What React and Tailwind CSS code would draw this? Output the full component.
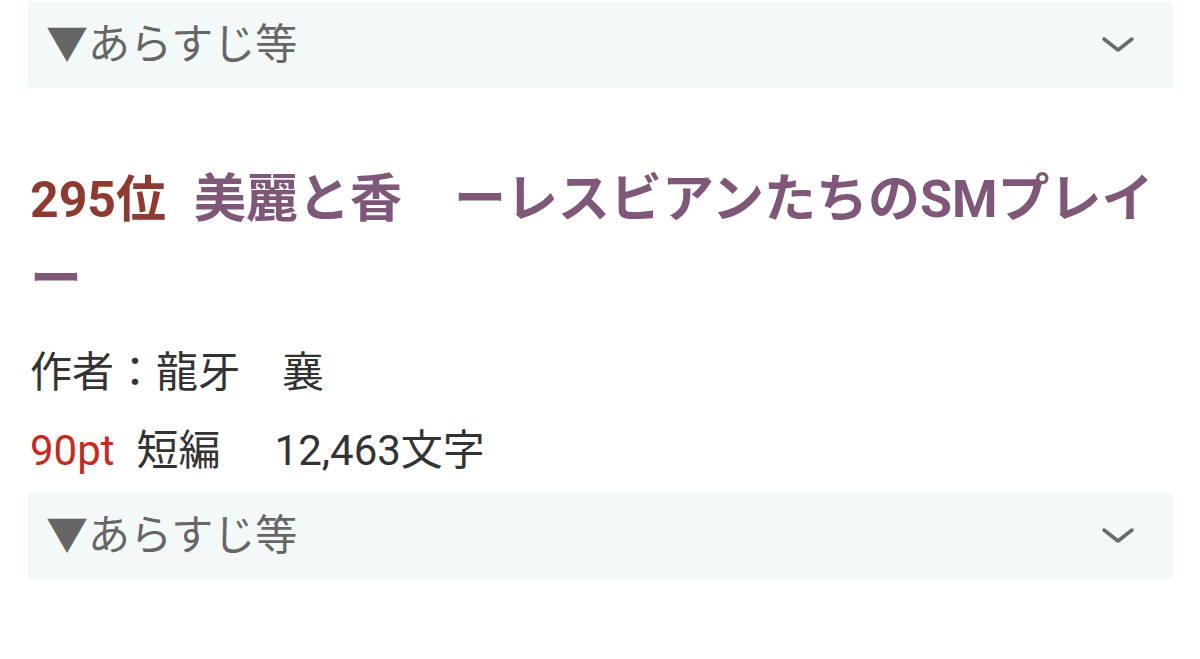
import React from "react";

const jp = { fontFamily: 'Roboto, "Noto Sans CJK JP", sans-serif' };

function Chevron() {
  return (
    <svg width="34" height="20" viewBox="0 0 34 20" fill="none" className="shrink-0">
      <path d="M3 4 L17 15 L31 4" stroke="#6b6b6b" strokeWidth="3.5" strokeLinecap="round" strokeLinejoin="round" />
    </svg>
  );
}

function SummaryBar() {
  return (
    <div className="flex h-[86px] items-center justify-between bg-[#f3f8f8] pl-[18px] pr-[38px]">
      <span className="text-[42px] leading-none text-[#666666]">▼あらすじ等</span>
      <Chevron />
    </div>
  );
}

export default function App() {
  return (
    <div className="min-h-[659px] w-[1200px] bg-white" style={jp}>
      <div className="mx-[28px] w-[1145px] pt-[2px]">
        <SummaryBar />

        <h2 className="mt-[72px] px-[2px] text-[52px] font-bold leading-[80px]">
          <span className="text-[50px] text-[#8f3a31]">295位</span>
          <span className="ml-[28px] text-[#7f5879]">美麗と香　ーレスビアンたちのSMプレイー</span>
        </h2>

        <div className="mt-[14px] px-[2px] text-[42px] leading-[78px] text-[#333333]">
          <div>作者：龍牙　襄</div>
          <div>
            <span className="text-[#c8291e]">90pt</span>
            <span className="ml-[22px]">短編</span>
            <span className="ml-[54px]">12,463文字</span>
          </div>
        </div>

        <div className="mt-[3px]">
          <SummaryBar />
        </div>
      </div>
    </div>
  );
}
